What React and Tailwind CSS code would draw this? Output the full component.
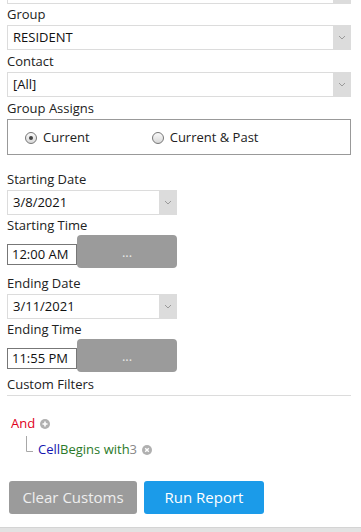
import { useState } from "react"

const FONT = { fontFamily: "'Open Sans', 'Liberation Sans', sans-serif" }

function Chevron() {
  return (
    <svg width="8" height="5" viewBox="0 0 8 5" fill="none">
      <path d="M1 1l3 3 3-3" stroke="#9a9a9a" strokeWidth="1" />
    </svg>
  )
}

function SelectBox({ value, className = "" }) {
  return (
    <div className={`h-[25px] flex border border-[#dcdcdc] bg-white ${className}`}>
      <div className="flex-1 flex items-center pl-[5px] text-[13px] text-[#111]">{value}</div>
      <div className="w-[17px] bg-[#dcdcdc] flex items-center justify-center">
        <Chevron />
      </div>
    </div>
  )
}

function Label({ children, className = "" }) {
  return <div className={`text-[13px] leading-[21px] text-[#222] ${className}`}>{children}</div>
}

function Radio({ checked, label, onClick }) {
  return (
    <button onClick={onClick} className="flex items-center gap-[6px] text-[13px] text-[#222]">
      <span className="w-[12px] h-[12px] rounded-full border border-[#777] bg-gradient-to-b from-[#fafafa] to-[#d8d8d8] flex items-center justify-center">
        {checked && <span className="w-[4px] h-[4px] rounded-full bg-[#444]" />}
      </span>
      {label}
    </button>
  )
}

function TimeRow({ value }) {
  return (
    <div className="flex items-center h-[33px]">
      <div className="w-[70px] h-[21px] mt-[6px] border border-[#777] flex items-center pl-[4px] text-[13px] text-[#111] bg-white">
        {value}
      </div>
      <button className="w-[100px] h-[33px] rounded-[4px] bg-[#9b9b9b] text-[#e8e8e8] text-[13px] leading-none pt-[2px]">
        ...
      </button>
    </div>
  )
}

function CircleIcon({ type }) {
  return (
    <svg width="10" height="10" viewBox="0 0 10 10">
      <circle cx="5" cy="5" r="5" fill="#b0b0b0" />
      {type === "plus" ? (
        <path d="M5 2.5v5M2.5 5h5" stroke="#fff" strokeWidth="1.6" />
      ) : (
        <path d="M3.2 3.2l3.6 3.6M6.8 3.2l-3.6 3.6" stroke="#fff" strokeWidth="1.4" />
      )}
    </svg>
  )
}

function Connector() {
  return (
    <svg width="8" height="16" viewBox="0 0 8 16" className="shrink-0">
      <path d="M0.5 0v15.5H7" fill="none" stroke="#a8a8a8" strokeWidth="1" />
    </svg>
  )
}

export default function App() {
  const [assign, setAssign] = useState("current")

  return (
    <div className="w-[361px] h-[532px] bg-white flex flex-col overflow-hidden" style={FONT}>
      <div className="px-[7px] flex-1">
        <SelectBox value="" className="w-[344px] -mt-[21px]" />

        <Label>Group</Label>
        <SelectBox value="RESIDENT" className="w-[344px]" />

        <Label className="mt-[1px]">Contact</Label>
        <SelectBox value="[All]" className="w-[344px]" />

        <Label className="mt-[1px]">Group Assigns</Label>
        <div className="w-[344px] h-[36px] border border-[#999] flex items-center pt-[2px] pl-[17px] gap-[62px]">
          <Radio checked={assign === "current"} label="Current" onClick={() => setAssign("current")} />
          <Radio checked={assign === "past"} label="Current & Past" onClick={() => setAssign("past")} />
        </div>

        <Label className="mt-[14px]">Starting Date</Label>
        <SelectBox value="3/8/2021" className="w-[170px]" />
        <Label className="-mb-[1px]">Starting Time</Label>
        <TimeRow value="12:00 AM" />

        <Label className="mt-[5px]">Ending Date</Label>
        <SelectBox value="3/11/2021" className="w-[170px]" />
        <Label className="-mb-[1px]">Ending Time</Label>
        <TimeRow value="11:55 PM" />

        <Label className="mt-[2px]">Custom Filters</Label>
        <div className="w-[344px] h-px bg-[#dcdcdc]" />

        <div className="mt-[19px] pl-[4px] text-[13px]">
          <div className="flex items-center gap-[5px] h-[18px]">
            <span className="text-[#e0001b]">And</span>
            <CircleIcon type="plus" />
          </div>
          <div className="flex items-start mt-[3px] ml-[15px]">
            <Connector />
            <div className="flex items-center h-[22px] mt-[3px] pl-[4px]">
              <span className="text-[#1515b0]">Cell</span>
              <span className="text-[#2a7a2a]">Begins with</span>
              <span className="text-[#888]">3</span>
              <span className="ml-[5px]">
                <CircleIcon type="x" />
              </span>
            </div>
          </div>
        </div>

        <div className="flex gap-[7px] mt-[20px] pl-[2px]">
          <button className="w-[128px] h-[33px] rounded-[3px] bg-[#9b9b9b] text-[#eeeeee] text-[15px]">
            Clear Customs
          </button>
          <button className="w-[120px] h-[33px] rounded-[3px] bg-[#1b9be9] text-white text-[15px]">
            Run Report
          </button>
        </div>
      </div>
      <div className="h-[5px] bg-[#e2e2e2] border-t border-[#d4d4d4]" />
    </div>
  )
}
